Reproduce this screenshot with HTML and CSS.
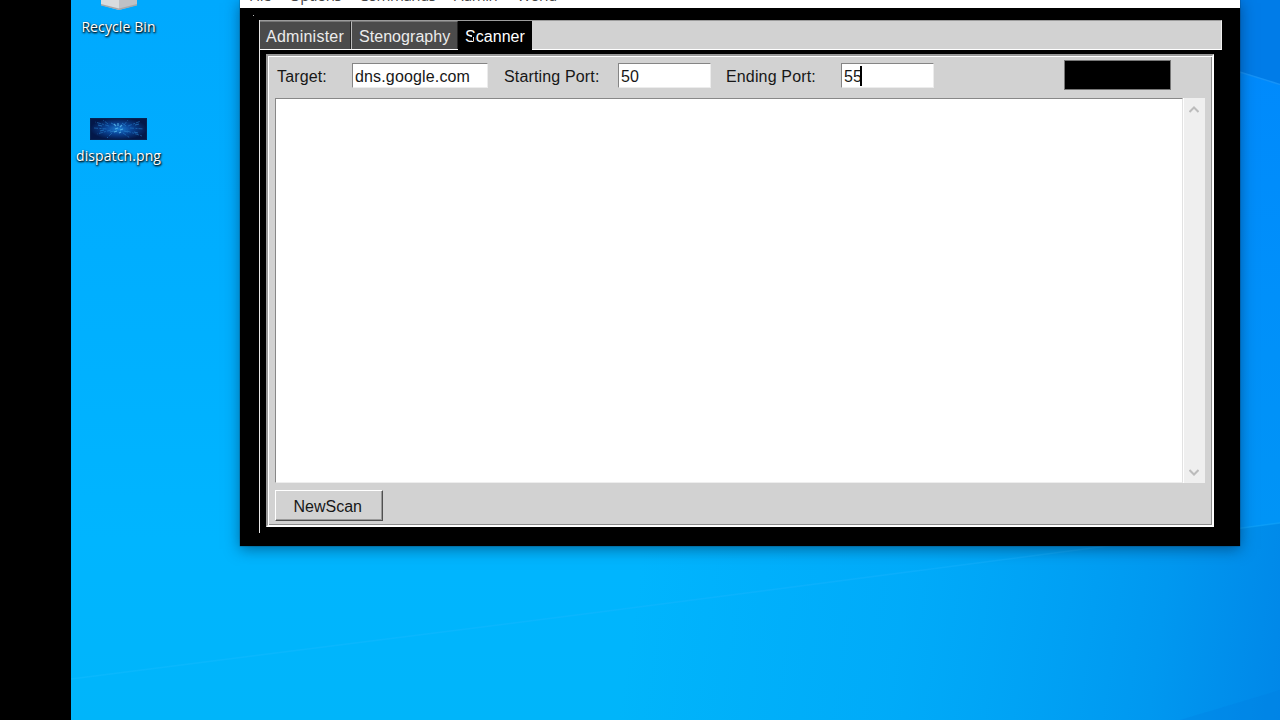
FILE: index.html
```html
<!DOCTYPE html>
<html lang="en">
<head>
<meta charset="utf-8">
<title>Scanner</title>
<link rel="stylesheet" href="styles.css">
</head>
<body>
<div class="screen">
  <main class="desktop">
    <svg class="wallpaper" viewBox="71 0 1209 720" preserveAspectRatio="none" aria-hidden="true">
      <defs>
        <linearGradient id="base" x1="0" y1="0" x2="0" y2="1"><stop offset="0" stop-color="#00a9fe"/><stop offset=".35" stop-color="#00aeff"/><stop offset=".75" stop-color="#00b5ff"/><stop offset="1" stop-color="#00b5fa"/></linearGradient>
        <linearGradient id="side" gradientUnits="userSpaceOnUse" x1="640" y1="560" x2="1290" y2="650"><stop offset="0" stop-color="#00a5f8" stop-opacity="0"/><stop offset=".4" stop-color="#00a7f8" stop-opacity=".7"/><stop offset=".8" stop-color="#0098f0"/><stop offset="1" stop-color="#0087e8"/></linearGradient>
        <linearGradient id="edge" gradientUnits="userSpaceOnUse" x1="0" y1="70" x2="0" y2="524"><stop offset="0" stop-color="#008afc"/><stop offset=".5" stop-color="#0090fa"/><stop offset="1" stop-color="#0094f6"/></linearGradient>
        <linearGradient id="beam" gradientUnits="userSpaceOnUse" x1="71" y1="0" x2="1280" y2="0"><stop offset="0" stop-color="#18bcff" stop-opacity=".4"/><stop offset="1" stop-color="#20b0ff" stop-opacity=".35"/></linearGradient>
      </defs>
      <rect x="71" width="1209" height="720" fill="url(#base)"/>
      <rect x="600" y="500" width="680" height="220" fill="url(#side)"/>
      <path d="M1230 0H1280V523L1230 530Z" fill="url(#edge)"/>
      <path d="M1230 0H1280V85L1230 69Z" fill="#007ce8"/>
      <path d="M1238 71.500L1280 84.500" stroke="#1593f8" stroke-width="1.500"/>
      <path d="M71 679L600 612L900 573L1100 547L1280 523" fill="none" stroke="url(#beam)" stroke-width="1.500"/>
      <path d="M1180 720L1280 690V720Z" fill="#007fe2" opacity=".3"/>
    </svg>

    <div class="shortcuts">
      <div class="shortcut">
        <svg class="bin" width="38" height="10" viewBox="0 0 38 10" aria-hidden="true"><path d="M1 0H19V10L1 5Z" fill="#d9dcde"/><path d="M19 0H37V5L19 10Z" fill="#bfc1c5"/><path d="M1 4L19 8.500L37 4V5.500L19 10L1 5.500Z" fill="#a5a7aa"/></svg>
        <span class="label">Recycle Bin</span>
      </div>
      <div class="shortcut">
        <svg class="thumb" width="57" height="22" viewBox="0 0 57 22" aria-hidden="true">
          <defs><radialGradient id="glow"><stop offset="0" stop-color="#1d7fd6"/><stop offset=".45" stop-color="#0a4496"/><stop offset="1" stop-color="#031849"/></radialGradient></defs>
          <rect width="57" height="22" fill="url(#glow)"/>
          <g fill="none" stroke="#267cc9" opacity=".75">
            <path d="M19 8L5 4M21 12L7 16M34 7L38 2M37 13L52 18M38 8L51 3M22 15L17 20M18 6L13 2M33 15L40 20M4 10L17 11M40 10L54 11" stroke-width=".8" stroke-dasharray="4 1.500 2 1"/>
            <path d="M21 5L25 7M32 5L36 8M20 14L24 13M34 13L38 14M8 7L12 8M44 14L48 15M45 7L49 6M10 13L14 12" stroke-width="1"/>
          </g>
          <path d="M24 6L26 8M28 5V8M32 7L30 9M25 11L28 10M30 12L33 11M24 14L27 13M29 15L31 14" fill="none" stroke="#5fc0f0" stroke-width="1.200" opacity=".75"/>
          <rect x=".5" y=".5" width="56" height="21" fill="none" stroke="#062352"/>
        </svg>
        <span class="label">dispatch.png</span>
      </div>
    </div>

    <section class="window">
      <nav class="menubar"><span class="m1">File</span><span class="m2">Options</span><span class="m3">Commands</span><span class="m4">Admin</span><span class="m5">World</span></nav>
      <div class="notebook">
        <div class="tabs">
          <div class="tab administer">Administer</div>
          <div class="tab stenography">Stenography</div>
          <div class="tab scanner active">Scanner</div>
        </div>
        <div class="page">
          <div class="form">
            <span class="caption target">Target:</span><div class="field host">dns.google.com</div>
            <span class="caption start">Starting Port:</span><div class="field">50</div>
            <span class="caption end">Ending Port:</span><div class="field"><span class="typed">55</span><i class="caret"></i></div>
            <div class="action"></div>
          </div>
          <div class="output">
            <div class="text"></div>
            <div class="scrollbar">
              <svg width="10" height="7" viewBox="0 0 10 7" aria-hidden="true"><path d="M.5 6L5 1.500L9.500 6" fill="none" stroke="#bcbcbc" stroke-width="2"/></svg>
              <svg width="10" height="7" viewBox="0 0 10 7" aria-hidden="true"><path d="M.5 1L5 5.500L9.500 1" fill="none" stroke="#bcbcbc" stroke-width="2"/></svg>
            </div>
          </div>
          <div class="newscan">NewScan</div>
        </div>
      </div>
      <i class="speck"></i>
      <svg class="pointer" width="5" height="22" viewBox="0 0 5 22" aria-hidden="true"><path d="M1 2H4V8H1ZM0 18H4V21H1Z" fill="#000"/><path d="M2.500 4V8" stroke="#ddd"/></svg>
    </section>
  </main>
</div>
</body>
</html>
```
FILE: styles.css
```css
* { box-sizing: border-box; }
body { margin: 0; background: #000; font: 16px/20px "Liberation Sans", Arial, sans-serif; overflow: hidden; }
.screen { width: 1280px; height: 720px; padding-left: 71px; }
.desktop { position: relative; width: 1209px; height: 720px; overflow: hidden; }
.wallpaper { position: absolute; inset: 0; width: 100%; height: 100%; }

.shortcuts { position: absolute; left: 0; top: 0; width: 95px; display: flex; flex-direction: column; gap: 81px; }
.shortcut { display: flex; flex-direction: column; align-items: center; }
.bin { margin-bottom: 7px; }
.thumb { margin-bottom: 6px; }
.label { font: 14px/20px "Open Sans", "Noto Sans", sans-serif; color: #fff; white-space: nowrap; letter-spacing: .1px; text-shadow: 1px 1px 2px #000, 0 1px 2px rgba(0,0,0,.8); }

.window { position: absolute; left: 169px; top: 0; width: 1000px; height: 546px; background: #000; box-shadow: 0 0 1px #123, 0 3px 14px rgba(0,30,60,.5); }
.menubar { height: 8px; background: #fff; overflow: hidden; display: flex; padding-left: 9px; font: 15px/20px "Open Sans", "Noto Sans", sans-serif; letter-spacing: -.45px; color: #444; }
.menubar span { margin-top: -15px; flex: none; white-space: nowrap; }
.m1 { width: 40px; }
.m2 { width: 70px; }
.m3 { width: 95px; }
.m4 { width: 63px; }

.notebook { margin: 12px 0 0 19px; width: 963px; height: 513px; border-left: 1px solid #e6e6e6; }
.tabs { display: flex; height: 30px; width: 962px; background: #d2d2d2; border-top: 1px solid #9c9c9c; border-bottom: 1px solid #fff; border-right: 1px solid #eee; }
.tab { height: 28px; padding-left: 6px; background: #4b4b4b; color: #ececec; line-height: 29px; border-right: 1px solid #242424; border-top: 1px solid #777; white-space: nowrap; letter-spacing: .25px; }
.administer { width: 91px; }
.stenography { width: 107px; padding-left: 7px; border-left: 1px solid #bbb; letter-spacing: .05px; }
.active { width: 74px; height: 30px; background: #000; border-color: #000; border-left: 1px solid #000; color: #fff; letter-spacing: .05px; }

.page { margin: 4px 0 0 6px; width: 948px; height: 473px; background: #d2d2d2; border: 2px solid; border-color: #999 #fff #fff #999; box-shadow: inset 1px 1px #fff, inset -1px -1px #8c8c8c; padding: 4px 7px 0 7px; color: #171717; }
.form { display: flex; height: 38px; align-items: flex-start; }
.caption { flex: none; padding: 7px 0 0 2px; white-space: nowrap; letter-spacing: .15px; }
.target { width: 77px; }
.start { width: 130px; padding-left: 16px; }
.end { width: 130px; padding-left: 15px; }
.field { display: flex; align-items: center; width: 93px; height: 25px; margin-top: 3px; padding: 3px 0 0 2px; background: #fff; border: 1px solid; border-color: #858585 #ececec #ececec #858585; }
.host { width: 136px; letter-spacing: .15px; }
.caret { width: 2px; height: 20px; margin: -2px 0 0 -2px; background: #000; }
.action { width: 107px; height: 30px; margin-left: 130px; background: #000; border: 1px solid #777; }

.output { display: flex; width: 930px; height: 385px; }
.text { width: 908px; background: #fff; border: 1px solid; border-color: #888 #e2e2e2 #eee #888; }
.scrollbar { width: 22px; border-left: 1px solid #fff; background: #efefef; display: flex; flex-direction: column; justify-content: space-between; align-items: center; padding: 8px 1px 7px 0; }
.newscan { margin-top: 7px; width: 108px; height: 31px; padding: 1px 0 0 17.5px; line-height: 30px; border: 1px solid; border-color: #fff #505050 #505050 #fff; box-shadow: inset -1px -1px #999; }
.speck { position: absolute; left: 13px; top: 15px; width: 1px; height: 1px; background: #bbb; }
.pointer { position: absolute; left: 231px; top: 33px; }
```
